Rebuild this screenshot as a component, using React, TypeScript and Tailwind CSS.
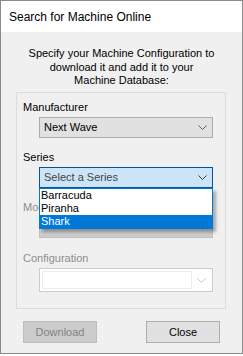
import React from "react";

const Chevron: React.FC<{ color?: string }> = ({ color = "#606060" }) => (
    <svg width="9" height="5" viewBox="0 0 9 5" fill="none">
        <path d="M0.5 0.5 L4.5 4.5 L8.5 0.5" stroke={color} strokeWidth="1" />
    </svg>
);

const series = ["Barracuda", "Piranha", "Shark"];

const App: React.FC = () => {
    return (
        <div
            className="w-[243px] h-[354px] border border-[#8a8a8a] bg-[#f0f0f0] flex flex-col text-[11px] text-black"
            style={{ fontFamily: '"Liberation Sans", Arial, sans-serif' }}
        >
            {/* Title bar */}
            <div className="h-[31px] bg-white flex items-center pl-[8px] shrink-0 text-[12px]">Search for Machine Online</div>

            {/* Intro */}
            <div className="h-[60px] pt-[15px] text-center leading-[13.5px] shrink-0">
                <p>Specify your Machine Configuration to</p>
                <p>download it and add it to your</p>
                <p>Machine Database:</p>
            </div>

            {/* Group box */}
            <div className="ml-[15px] w-[210px] border border-[#dcdcdc] pt-[7px] pb-[16px] flex flex-col">
                <div className="pl-[6px] leading-[14px]">Manufacturer</div>
                <div className="mt-[3px] ml-[22px] w-[174px] h-[21px] border border-[#adadad] bg-[#e1e1e1] flex items-center justify-between pl-[4px] pr-[5px]">
                    <span>Next Wave</span>
                    <Chevron />
                </div>

                <div className="mt-[12px] pl-[6px] leading-[14px]">Series</div>
                <div className="relative mt-[3px] ml-[22px] w-[174px]">
                    <div className="h-[21px] border border-[#005499] bg-[#cce4f7] flex items-center justify-between pl-[4px] pr-[5px] text-[#444]">
                        <span>Select a Series</span>
                        <Chevron color="#404040" />
                    </div>
                    {/* open list */}
                    <div className="absolute left-0 top-[21px] w-[174px] z-10 border border-[#0078d7] bg-white shadow-[3px_3px_3px_rgba(0,0,0,0.3)]">
                        {series.map((s) => (
                            <div
                                key={s}
                                className={
                                    s === "Shark"
                                        ? "h-[13px] leading-[13px] pl-[1px] bg-[#0078d7] text-white"
                                        : "h-[13px] leading-[13px] pl-[1px]"
                                }
                            >
                                {s}
                            </div>
                        ))}
                    </div>
                </div>

                <div className="mt-[12px] pl-[6px] leading-[14px] text-[#8d8d8d]">Model</div>
                <div className="mt-[3px] ml-[22px] w-[174px] h-[21px] border border-[#bfbfbf] bg-[#cccccc] flex items-center justify-end pr-[5px]">
                    <Chevron color="#8a8a8a" />
                </div>

                <div className="mt-[13px] pl-[6px] leading-[14px] text-[#8d8d8d]">Configuration</div>
                <div className="mt-[3px] ml-[22px] w-[174px] h-[24px] border border-[#cccccc] bg-white p-[2px] flex">
                    <div className="flex-1 border border-[#ececec]" />
                    <div className="w-[18px] flex items-center justify-center">
                        <Chevron color="#c2c2c2" />
                    </div>
                </div>
            </div>

            {/* Buttons */}
            <div className="mt-[12px] pl-[22px] flex gap-[49px]">
                <div className="w-[74px] h-[22px] border border-[#bfbfbf] bg-[#cccccc] text-[#838383] flex items-center justify-center">
                    Download
                </div>
                <div className="w-[74px] h-[22px] border border-[#adadad] bg-[#e1e1e1] flex items-center justify-center">
                    Close
                </div>
            </div>
        </div>
    );
};

export default App;
